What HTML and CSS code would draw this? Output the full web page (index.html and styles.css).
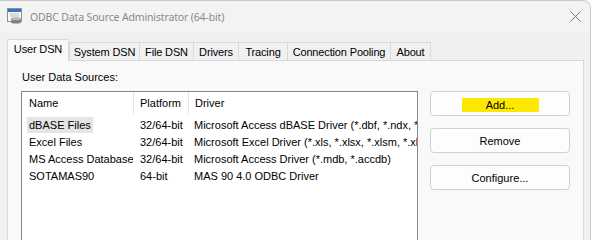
FILE: index.html
```html
<!DOCTYPE html>
<html>
<head>
<meta charset="utf-8">
<link rel="stylesheet" href="styles.css">
</head>
<body>
<div class="window">
  <div class="titlebar">
    <svg class="appicon" width="16" height="16" viewBox="0 0 16 16">
      <rect x="0.5" y="0.5" width="14" height="13" fill="#f4f6f8" stroke="#8a9098"/>
      <rect x="1" y="1" width="13" height="3" fill="#3c6fb5"/>
      <line x1="3" y1="6" x2="12" y2="6" stroke="#b8c0c8"/>
      <line x1="3" y1="8" x2="12" y2="8" stroke="#b8c0c8"/>
      <rect x="4" y="10.5" width="10" height="3.5" fill="#8a9298"/>
      <ellipse cx="9" cy="14" rx="5" ry="1.6" fill="#7a8288"/>
      <ellipse cx="9" cy="10.5" rx="5" ry="1.6" fill="#b4bcc2"/>
    </svg>
    <span class="title">ODBC Data Source Administrator (64-bit)</span>
    <svg class="close" width="11" height="11" viewBox="0 0 11 11">
      <path d="M0.5 0.5 L10.5 10.5 M10.5 0.5 L0.5 10.5" stroke="#7a7a7a" stroke-width="1" fill="none"/>
    </svg>
  </div>
  <div class="tabs">
    <div class="tab active">User DSN</div>
    <div class="tab">System DSN</div>
    <div class="tab">File DSN</div>
    <div class="tab">Drivers</div>
    <div class="tab">Tracing</div>
    <div class="tab">Connection Pooling</div>
    <div class="tab">About</div>
  </div>
  <div class="panel">
    <div class="label">User Data Sources:</div>
    <div class="content">
      <div class="list">
        <div class="row head">
          <div class="c1">Name</div>
          <div class="c2">Platform</div>
          <div class="c3">Driver</div>
        </div>
        <div class="row first">
          <div class="c1"><span class="sel">dBASE Files</span></div>
          <div class="c2">32/64-bit</div>
          <div class="c3">Microsoft Access dBASE Driver (*.dbf, *.ndx, *.mdx)</div>
        </div>
        <div class="row">
          <div class="c1">Excel Files</div>
          <div class="c2">32/64-bit</div>
          <div class="c3">Microsoft Excel Driver (*.xls, *.xlsx, *.xlsm, *.xlsb)</div>
        </div>
        <div class="row">
          <div class="c1">MS Access Database</div>
          <div class="c2">32/64-bit</div>
          <div class="c3">Microsoft Access Driver (*.mdb, *.accdb)</div>
        </div>
        <div class="row">
          <div class="c1">SOTAMAS90</div>
          <div class="c2">64-bit</div>
          <div class="c3">MAS 90 4.0 ODBC Driver</div>
        </div>
      </div>
      <div class="buttons">
        <div class="btn"><span class="hl">Add...</span></div>
        <div class="btn">Remove</div>
        <div class="btn">Configure...</div>
      </div>
    </div>
  </div>
</div>
</body>
</html>
```
FILE: styles.css
```css
html, body {
  margin: 0;
  padding: 0;
  background: #ffffff;
}
body {
  width: 592px;
  height: 240px;
  overflow: hidden;
  font-family: "Liberation Sans", Arial, sans-serif;
  font-size: 11px;
  color: #000;
}
.window {
  width: 591px;
  height: 240px;
  background: #f0f0f0;
  border-top: 1px solid #c9c9c9;
  border-right: 1px solid #c9c9c9;
  border-top-right-radius: 8px;
  box-sizing: border-box;
  overflow: hidden;
}
.titlebar {
  height: 31px;
  display: flex;
  align-items: center;
  padding-left: 7px;
  background: #f3f3f3;
}
.appicon {
  flex: none;
  margin-top: -1px;
}
.title {
  margin-left: 7px;
  font-family: "Noto Sans", "Open Sans", sans-serif;
  font-size: 10.5px;
  letter-spacing: -0.15px;
  color: #8a8a8a;
  flex: 1;
}
.close {
  margin-right: 9px;
  margin-top: -1px;
}
.tabs {
  display: flex;
  align-items: flex-end;
  padding-left: 7px;
  margin-top: 7px;
  height: 21px;
  position: relative;
  z-index: 2;
}
.tab {
  height: 18px;
  line-height: 18px;
  text-align: center;
  letter-spacing: -0.15px;
  background: #f0f0f0;
  border: 1px solid #d9d9d9;
  border-bottom: none;
  border-right: none;
  box-sizing: border-box;
  white-space: nowrap;
}
.tab:nth-child(1) { width: 62px; }
.tab:nth-child(2) { width: 70px; }
.tab:nth-child(3) { width: 54px; }
.tab:nth-child(4) { width: 45px; }
.tab:nth-child(5) { width: 49px; }
.tab:nth-child(6) { width: 103px; }
.tab:nth-child(7) { width: 41px; border-right: 1px solid #d9d9d9; }
.tab.active {
  height: 22px;
  line-height: 18px;
  background: #f9f9f9;
  margin-bottom: -1px;
  border-right: 1px solid #d9d9d9;
}
.panel {
  width: 577px;
  height: 180px;
  margin-left: 7px;
  background: #f9f9f9;
  border: 1px solid #d9d9d9;
  border-bottom: none;
  box-sizing: border-box;
  padding: 10px 0 0 13px;
}
.label {
  height: 13px;
  line-height: 13px;
  padding-left: 1px;
}
.content {
  display: flex;
  margin-top: 7px;
  gap: 12px;
}
.list {
  width: 397px;
  height: 149px;
  background: #fff;
  border: 1px solid #828790;
  border-bottom: none;
  box-sizing: border-box;
  overflow: hidden;
}
.row {
  display: grid;
  grid-template-columns: 111px 55px 1fr;
  height: 17px;
  line-height: 18px;
  white-space: nowrap;
}
.row.head {
  height: 22px;
  line-height: 22px;
  margin-bottom: 2px;
}
.row > div {
  padding-left: 7px;
  overflow: hidden;
}
.row.head > .c2,
.row.head > .c3 {
  border-left: 1px solid #e5e5e5;
  padding-left: 6px;
}
.row > .c3 {
  padding-left: 6px;
}
.sel {
  display: inline-block;
  background: #e5e5e5;
  margin-left: -2px;
  padding: 0 2px;
  width: 62px;
  line-height: 16px;
}
.buttons {
  display: flex;
  flex-direction: column;
  gap: 12px;
  width: 140px;
}
.btn {
  height: 25px;
  box-sizing: border-box;
  border: 1px solid #d0d0d0;
  border-radius: 4px;
  background: #fdfdfd;
  display: flex;
  align-items: center;
  justify-content: center;
}
.hl {
  display: inline-block;
  width: 77px;
  height: 14px;
  line-height: 14px;
  text-align: center;
  background: #ffe800;
  margin-top: 3px;
}
```
